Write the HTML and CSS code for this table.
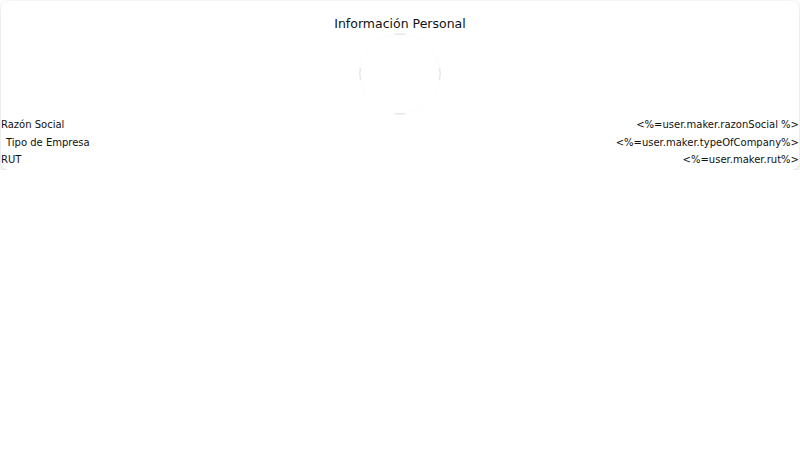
FILE: index.html
```html
<!DOCTYPE html>
<html lang="es">
<head>
<meta charset="utf-8">
<title>Información Personal</title>
<link rel="stylesheet" href="styles.css">
</head>
<body>
<div class="card">
  <h2 class="card-title">Información Personal</h2>
  <div class="avatar">
    <svg width="82" height="82" viewBox="0 0 82 82" aria-hidden="true">
      <circle cx="41" cy="41" r="40" fill="none" stroke="#fcfcfc" stroke-width="1"/>
      <path d="M36 1.3 A40 40 0 0 1 46 1.3" fill="none" stroke="#dddddd" stroke-width="1"/>
      <path d="M36 80.7 A40 40 0 0 0 46 80.7" fill="none" stroke="#dddddd" stroke-width="1"/>
      <path d="M1.3 35 A40 40 0 0 0 1.3 47" fill="none" stroke="#dddddd" stroke-width="1"/>
      <path d="M80.7 35 A40 40 0 0 1 80.7 47" fill="none" stroke="#dddddd" stroke-width="1"/>
    </svg>
  </div>
  <div class="rows">
    <div class="row"><span class="label">Razón Social</span><span class="value">&lt;%=user.maker.razonSocial %&gt;</span></div>
    <div class="row"><span class="label indent">Tipo de Empresa</span><span class="value">&lt;%=user.maker.typeOfCompany%&gt;</span></div>
    <div class="row"><span class="label">RUT</span><span class="value">&lt;%=user.maker.rut%&gt;</span></div>
  </div>
</div>
</body>
</html>
```
FILE: styles.css
```css
html, body {
  margin: 0;
  padding: 0;
  background: #ffffff;
  font-family: "DejaVu Sans", Verdana, sans-serif;
}
.card {
  margin: 1px 1px 0 1px;
  background: #fff;
  border-radius: 8px;
  box-shadow: 0 2px 6px rgba(0,0,0,0.16);
  padding: 0 0 1px 0;
}
.card-title {
  margin: 0;
  padding-top: 14px;
  font-size: 12.5px;
  font-weight: normal;
  line-height: 17px;
  text-align: center;
  color: #111;
}
.avatar {
  width: 82px;
  height: 82px;
  margin: 1px auto 1px auto;
}
.avatar svg {
  display: block;
}
.rows {
  display: flex;
  flex-direction: column;
}
.row {
  display: flex;
  justify-content: space-between;
  font-size: 10px;
  line-height: 17.5px;
  color: #111;
}
.indent {
  padding-left: 5px;
}
```
